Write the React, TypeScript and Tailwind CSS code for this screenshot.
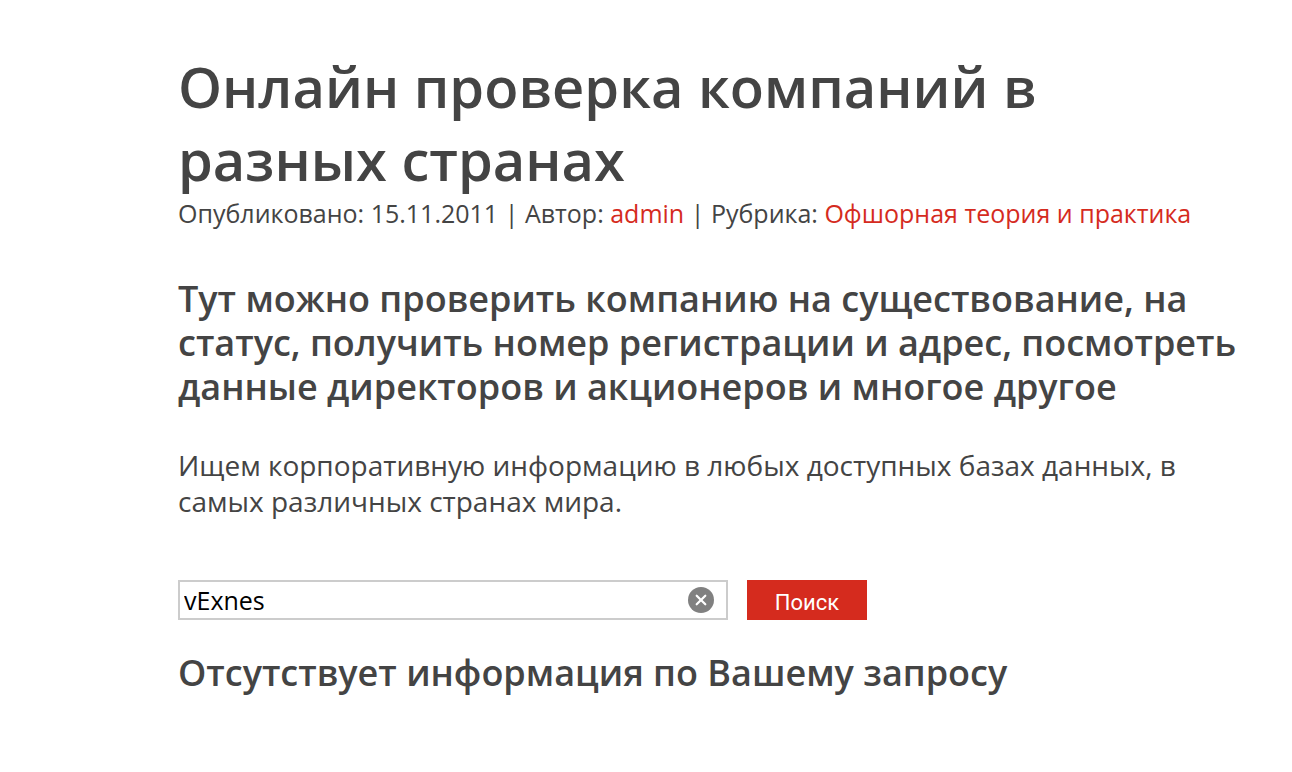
export default function App() {
  return (
    <main className="min-h-screen bg-white pt-[50px] pr-5 pl-[178px] font-['Trebuchet_MS','Open_Sans',sans-serif] text-[#444444]">
      <article>
        <h1 className="text-[56px] leading-[73px] font-semibold">
          Онлайн проверка компаний в<br />
          разных странах
        </h1>
        <p className="text-[25px] leading-[34px]">
          Опубликовано: 15.11.2011 | Автор:{' '}
          <a href="#admin" className="text-[#d52b1e]">admin</a> | Рубрика:{' '}
          <a href="#category" className="text-[#d52b1e]">Офшорная теория и практика</a>
        </p>
        <h2 className="mt-[47px] text-[36px] leading-[44px] font-semibold">
          Тут можно проверить компанию на существование, на<br />
          статус, получить номер регистрации и адрес, посмотреть<br />
          данные директоров и акционеров и многое другое
        </h2>
        <p className="mt-[38px] text-[28px] leading-[36px]">
          Ищем корпоративную информацию в любых доступных базах данных, в<br />
          самых различных странах мира.
        </p>
        <form className="mt-[61px] flex gap-[19px]" onSubmit={(e) => e.preventDefault()}>
          <div className="flex h-10 w-[550px] items-center border-2 border-[#cccccc] pr-3 pl-1">
            <input
              aria-label="Компания"
              defaultValue="vExnes"
              className="min-w-0 flex-1 text-[25px] leading-9 text-black outline-none"
            />
            <button type="reset" aria-label="Очистить">
              <svg viewBox="0 0 26 26" className="block size-[26px]">
                <circle cx="13" cy="13" r="13" fill="#808080" />
                <path d="M8.7 8.7l8.6 8.6M17.3 8.7l-8.6 8.6" stroke="white" strokeWidth="2.2" strokeLinecap="round" />
              </svg>
            </button>
          </div>
          <button type="submit" className="h-10 w-[120px] bg-[#d52b1e] pt-1 font-[Roboto,sans-serif] text-[22px] text-white">
            Поиск
          </button>
        </form>
        <h2 className="mt-[31px] text-[36px] leading-[44px] font-semibold">
          Отсутствует информация по Вашему запросу
        </h2>
      </article>
    </main>
  );
}
